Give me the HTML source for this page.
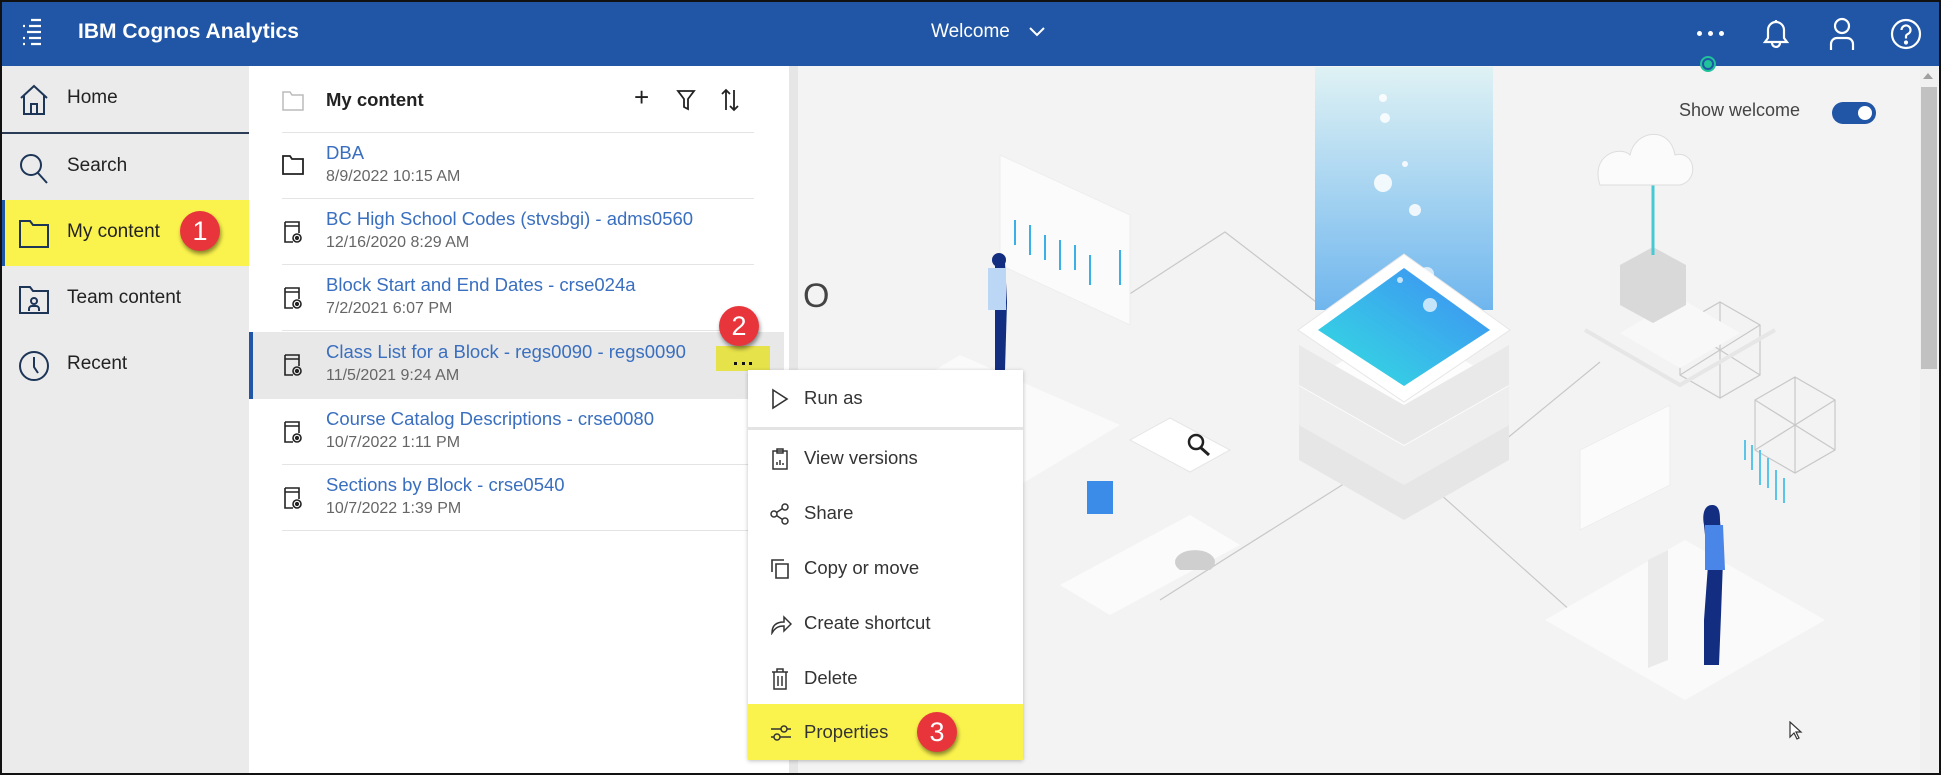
<!DOCTYPE html>
<html><head><meta charset="utf-8">
<style>
*{margin:0;padding:0;box-sizing:border-box}
body{width:1941px;height:775px;overflow:hidden;font-family:"Liberation Sans",sans-serif;background:#f3f3f3;position:relative}
.abs{position:absolute}
#hdr{left:0;top:0;width:1941px;height:66px;background:#2056a5;color:#fff}
#side{left:0;top:66px;width:249px;height:709px;background:#ebebeb}
.nav{position:absolute;left:0;width:249px;height:66px;font-size:19px;color:#222}
.nav span{position:absolute;left:67px;top:21px}
.nav svg{position:absolute;left:18px;top:17px}
#panel{left:249px;top:66px;width:540px;height:709px;background:#fff}
.row{position:absolute;left:33px;width:472px;height:66px;border-bottom:1px solid #e4e4e4}
.row .t{position:absolute;left:44px;top:9px;font-size:18.5px;color:#3a6fbf;white-space:nowrap}
.row .d{position:absolute;left:44px;top:35px;font-size:16px;color:#666;white-space:nowrap}
.row svg{position:absolute;left:0;top:22px}
.badge{position:absolute;width:40px;height:40px;border-radius:50%;background:#e8353b;color:#fff;font-size:27px;text-align:center;line-height:40px;box-shadow:1px 3px 4px rgba(0,0,0,.45)}
#menu{left:748px;top:370px;width:275px;height:390px;background:#fff;box-shadow:0 1px 4px rgba(0,0,0,.25)}
.mi{position:absolute;left:0;width:275px;height:55px;font-size:18.5px;color:#333}
.mi span{position:absolute;left:56px;top:17px}
.mi svg{position:absolute;left:22px;top:18px}
</style></head><body>
<div id="hdr" class="abs">
 <svg class="abs" style="left:20px;top:17px" width="30" height="32" viewBox="0 0 30 32" stroke="#fff" stroke-width="2.2" fill="none"><path d="M11 3h10M3 9h2M9 9h12M7 15h14M3 21h2M9 21h12M11 27h10M3 27h2"/></svg>
 <div class="abs" style="left:78px;top:20px;font-size:21px;font-weight:bold">IBM Cognos Analytics</div>
 <div class="abs" style="left:931px;top:21px;font-size:19px">Welcome</div>
 <svg class="abs" style="left:1028px;top:24px" width="18" height="14" viewBox="0 0 18 14" stroke="#fff" stroke-width="2" fill="none"><path d="M2 4l7 7 7-7"/></svg>
 <div class="abs" style="left:1697px;top:31px;width:28px;height:6px"><span class="abs" style="left:0;width:5px;height:5px;border-radius:50%;background:#fff"></span><span class="abs" style="left:11px;width:5px;height:5px;border-radius:50%;background:#fff"></span><span class="abs" style="left:22px;width:5px;height:5px;border-radius:50%;background:#fff"></span></div>
 <svg class="abs" style="left:1761px;top:17px" width="30" height="34" viewBox="0 0 30 34" stroke="#fff" stroke-width="2.2" fill="none"><path d="M4 25h22l-3-4V13a8 8 0 0 0-16 0v8z M15 3v2 M11 26a4 4 0 0 0 8 0"/></svg>
 <svg class="abs" style="left:1828px;top:17px" width="28" height="34" viewBox="0 0 28 34" stroke="#fff" stroke-width="2.2" fill="none"><circle cx="14" cy="9" r="7"/><path d="M3 33v-6a6 6 0 0 1 6-6h10a6 6 0 0 1 6 6v6"/></svg>
 <svg class="abs" style="left:1890px;top:18px" width="32" height="32" viewBox="0 0 32 32" stroke="#fff" stroke-width="2.2" fill="none"><circle cx="16" cy="16" r="14"/><path d="M11.5 12a4.5 4.5 0 1 1 6 4.2c-1 .5-1.5 1.3-1.5 2.3v2"/><circle cx="16" cy="24.5" r="1" fill="#fff"/></svg>
</div>
<div class="abs" style="left:1700px;top:56px;width:16px;height:16px;border-radius:50%;border:2px solid #1fc29a;background:#2056a5"><div style="margin:2px;width:8px;height:8px;border-radius:50%;background:#1fc29a"></div></div>

<div id="side" class="abs">
 <div class="nav" style="top:0"><svg width="32" height="34" viewBox="0 0 32 34" stroke="#1d3557" stroke-width="2" fill="none"><path d="M3 15L16 3l13 12M6 12v19h20V12M13 31v-10h6v10"/></svg><span>Home</span></div>
 <div class="abs" style="left:0;top:66px;width:249px;height:2px;background:#2a3b55"></div>
 <div class="nav" style="top:68px"><svg width="32" height="34" viewBox="0 0 32 34" stroke="#1d3557" stroke-width="2" fill="none"><circle cx="13" cy="14" r="10"/><path d="M20 22l9 10"/></svg><span>Search</span></div>
 <div class="nav" style="top:134px;background:#fbf34d;height:66px"><div class="abs" style="left:0;top:0;width:5px;height:66px;background:#2056a5"></div><svg width="32" height="34" viewBox="0 0 32 34" stroke="#1d3557" stroke-width="2" fill="none"><path d="M2 4h10l3 4h15v22H2z"/></svg><span>My content</span></div>
 <div class="nav" style="top:200px"><svg width="32" height="34" viewBox="0 0 32 34" stroke="#1d3557" stroke-width="2" fill="none"><path d="M2 4h10l3 4h15v22H2z"/><circle cx="16" cy="18" r="3"/><path d="M11 28v-2a3 3 0 0 1 3-3h4a3 3 0 0 1 3 3v2"/></svg><span>Team content</span></div>
 <div class="nav" style="top:266px"><svg width="32" height="34" viewBox="0 0 32 34" stroke="#1d3557" stroke-width="2" fill="none"><circle cx="16" cy="17" r="14"/><path d="M16 8v10l4 6"/></svg><span>Recent</span></div>
</div>
<div class="badge" style="left:180px;top:211px">1</div>

<div id="panel" class="abs">
 <svg class="abs" style="left:33px;top:25px" width="22" height="20" viewBox="0 0 22 20" stroke="#bbb" stroke-width="1.5" fill="none"><path d="M1 1h7l2 3h11v15H1z"/></svg>
 <div class="abs" style="left:77px;top:23px;font-size:18.5px;font-weight:bold;color:#222">My content</div>
 <div class="abs" style="left:385px;top:16px;font-size:26px;color:#222">+</div>
 <svg class="abs" style="left:427px;top:23px" width="20" height="22" viewBox="0 0 20 22" stroke="#222" stroke-width="1.8" fill="none"><path d="M2 2h16l-6 8v10l-4-2v-8z"/></svg>
 <svg class="abs" style="left:471px;top:22px" width="20" height="24" viewBox="0 0 20 24" stroke="#222" stroke-width="1.8" fill="none"><path d="M6 22V2M2 6l4-4 4 4M14 2v20M10 18l4 4 4-4"/></svg>
 <div class="abs" style="left:33px;top:66px;width:472px;height:1px;background:#e4e4e4"></div>
 <div class="row" style="top:67px"><svg width="22" height="20" viewBox="0 0 22 20" stroke="#222" stroke-width="1.8" fill="none"><path d="M1 1h7l2 3h11v15H1z"/></svg><div class="t">DBA</div><div class="d">8/9/2022 10:15 AM</div></div>
 <div class="row" style="top:133px"><svg width="22" height="22" viewBox="0 0 22 22" stroke="#222" stroke-width="1.6" fill="none"><path d="M3 1h14v11M3 1v20h8M3 5h14"/><circle cx="15" cy="17" r="4"/><circle cx="15" cy="17" r="1.3" fill="#222"/></svg><div class="t">BC High School Codes (stvsbgi) - adms0560</div><div class="d">12/16/2020 8:29 AM</div></div>
 <div class="row" style="top:199px"><svg width="22" height="22" viewBox="0 0 22 22" stroke="#222" stroke-width="1.6" fill="none"><path d="M3 1h14v11M3 1v20h8M3 5h14"/><circle cx="15" cy="17" r="4"/><circle cx="15" cy="17" r="1.3" fill="#222"/></svg><div class="t">Block Start and End Dates - crse024a</div><div class="d">7/2/2021 6:07 PM</div></div>
 <div class="abs" style="left:0;top:266px;width:535px;height:67px;background:#e8e8e8"><div class="abs" style="left:0;top:0;width:4px;height:67px;background:#2056a5"></div></div>
 <div class="row" style="top:266px;border:none"><svg width="22" height="22" viewBox="0 0 22 22" stroke="#222" stroke-width="1.6" fill="none"><path d="M3 1h14v11M3 1v20h8M3 5h14"/><circle cx="15" cy="17" r="4"/><circle cx="15" cy="17" r="1.3" fill="#222"/></svg><div class="t">Class List for a Block - regs0090 - regs0090</div><div class="d">11/5/2021 9:24 AM</div></div>
 <div class="abs" style="left:467px;top:280px;width:54px;height:25px;background:#e6e24a"><div style="position:absolute;left:18px;top:16px;width:18px;height:3px;border-left:3px solid #111;border-right:3px solid #111"><div style="margin:0 auto;width:3px;height:3px;background:#111"></div></div></div>
 <div class="row" style="top:333px"><svg width="22" height="22" viewBox="0 0 22 22" stroke="#222" stroke-width="1.6" fill="none"><path d="M3 1h14v11M3 1v20h8M3 5h14"/><circle cx="15" cy="17" r="4"/><circle cx="15" cy="17" r="1.3" fill="#222"/></svg><div class="t">Course Catalog Descriptions - crse0080</div><div class="d">10/7/2022 1:11 PM</div></div>
 <div class="row" style="top:399px"><svg width="22" height="22" viewBox="0 0 22 22" stroke="#222" stroke-width="1.6" fill="none"><path d="M3 1h14v11M3 1v20h8M3 5h14"/><circle cx="15" cy="17" r="4"/><circle cx="15" cy="17" r="1.3" fill="#222"/></svg><div class="t">Sections by Block - crse0540</div><div class="d">10/7/2022 1:39 PM</div></div>
</div>
<div class="abs" style="left:789px;top:66px;width:9px;height:709px;background:#e6e6e6"></div>
<div class="abs" style="left:803px;top:277px;font-size:34px;color:#444">O</div>

<svg class="abs" style="left:798px;top:66px" width="1122" height="709" viewBox="798 66 1122 709">
 <defs>
  <linearGradient id="col" x1="0" y1="0" x2="0" y2="1"><stop offset="0" stop-color="#dff2f4"/><stop offset="1" stop-color="#6fb6ee"/></linearGradient>
  <linearGradient id="scr" x1="0" y1="1" x2="1" y2="0"><stop offset="0" stop-color="#33e0e0"/><stop offset="1" stop-color="#3f8bf5"/></linearGradient>
 </defs>
 <g stroke="#c8c8c8" stroke-width="1.2" fill="none">
  <path d="M1105 310L1225 232L1320 305M1505 440L1600 362M1430 485L1620 655M1350 480L1160 600"/>
  <path d="M1720 302l40 23v50l-40 23-40-23v-50zM1720 302v96M1680 325l80 50M1760 325l-80 50"/>
  <path d="M1795 377l40 23v50l-40 23-40-23v-50zM1795 377v96M1755 400l80 50M1835 400l-80 50"/>
 </g>
 <path d="M960 355l160 70-150 90-160-70z" fill="#fafafa"/>
 <path d="M1000 155l130 60v110l-130-60z" fill="#fbfbfb" stroke="#eee"/>
 <rect x="1315" y="67" width="178" height="243" fill="url(#col)"/>
 <g fill="#fff" opacity=".85"><circle cx="1383" cy="98" r="4"/><circle cx="1385" cy="118" r="5"/><circle cx="1383" cy="183" r="9"/><circle cx="1415" cy="210" r="6"/><circle cx="1405" cy="164" r="3"/></g>
 <path d="M1299 420l105 60 105-60v40l-105 60-105-60z" fill="#e6e6e6"/>
 <path d="M1404 360l105 60-105 60-105-60z" fill="#fbfbfb"/>
 <path d="M1299 385l105 60 105-60v40l-105 60-105-60z" fill="#eeeeee"/>
 <path d="M1404 326l105 60-105 60-105-60z" fill="#fdfdfd"/>
 <path d="M1299 345l105 60 105-60v40l-105 60-105-60z" fill="#e9e9e9"/>
 <path d="M1404 254l106 76-106 72-106-72z" fill="#fff" stroke="#e6e6e6"/>
 <path d="M1404 268l86 62-86 56-86-56z" fill="url(#scr)"/>
 <g fill="#fff" opacity=".7"><circle cx="1427" cy="274" r="7"/><circle cx="1400" cy="280" r="3"/><circle cx="1430" cy="305" r="7"/></g>
 <path d="M1620 333l60-35 60 35-60 35z" fill="#f8f8f8"/>
 <path d="M1585 330l95 55 95-55" fill="none" stroke="#e6e6e6" stroke-width="4"/>
 <path d="M1620 265l33-18 33 18v40l-33 18-33-18z" fill="#d9d9d9"/>
 <path d="M1653 160v95" stroke="#45c9d4" stroke-width="3"/>
 <path d="M1600 185c-10-30 20-40 30-30 5-25 40-30 45 0 20-5 25 25 5 30z" fill="#fbfbfb" stroke="#ddd"/>
 <path d="M1545 620l140-80 140 80-140 80z" fill="#fafafa"/>
 <path d="M1580 450l90-45v80l-90 45z" fill="#fbfbfb" stroke="#eee"/>
 <path d="M1648 560l20-10v110l-20 8z" fill="#eaeaea"/>
 <path d="M1712 505c-8 0-10 10-8 20l4 40-4 55v45h15l2-50 2-55-3-40c0-10-2-15-8-15z" fill="#132d80"/>
 <path d="M1705 525l18 0 2 45h-20z" fill="#4a86e8"/>
 <path d="M1060 585l130-70 50 30-130 70z" fill="#fbfbfb"/>
 <rect x="1087" y="481" width="26" height="33" fill="#3a8ce8"/>
 <path d="M1180 570a20 12 0 1 1 30 0z" fill="#cfcfcf"/>
 <path d="M1130 440l40-22 60 32-40 22z" fill="#fff" stroke="#e6e6e6"/>
 <circle cx="1196" cy="442" r="7" fill="none" stroke="#222" stroke-width="2.5"/><path d="M1200 447l9 8" stroke="#222" stroke-width="3"/>
 <path d="M995 262l10 0 2 40 -2 68h-10z" fill="#132d80"/>
 <path d="M988 268h18v42h-18z" fill="#bcd7f5"/>
 <circle cx="999" cy="260" r="7" fill="#132d80"/>
 <g stroke="#3ab0e8" stroke-width="2"><path d="M1015 220v25M1030 225v30M1045 235v25M1060 240v30M1075 245v25M1090 255v30M1120 250v35"/></g>
 <g stroke="#5ac5e8" stroke-width="2"><path d="M1745 440v20M1752 445v25M1760 450v35M1768 458v30M1776 470v30M1784 478v25"/></g>
</svg>

<div class="abs" style="left:1679px;top:100px;font-size:18px;color:#444">Show welcome</div>
<div class="abs" style="left:1832px;top:102px;width:44px;height:22px;border-radius:11px;background:#2056a5"><div style="position:absolute;right:4px;top:4px;width:14px;height:14px;border-radius:50%;background:#fff"></div></div>
<div class="abs" style="left:1920px;top:66px;width:18px;height:709px;background:#f0f0f0"></div>
<div class="abs" style="left:1923px;top:73px;width:0;height:0;border-left:5px solid transparent;border-right:5px solid transparent;border-bottom:6px solid #a0a0a0"></div>
<div class="abs" style="left:1921px;top:87px;width:16px;height:282px;background:#c1c1c1"></div>

<div id="menu" class="abs">
 <div class="mi" style="top:0"><svg width="20" height="22" viewBox="0 0 20 22" stroke="#333" stroke-width="1.6" fill="none"><path d="M3 2l14 9-14 9z"/></svg><span>Run as</span></div>
 <div class="abs" style="left:0;top:57px;width:275px;height:3px;background:#e4e4e4"></div>
 <div class="mi" style="top:60px"><svg width="20" height="22" viewBox="0 0 20 22" stroke="#333" stroke-width="1.5" fill="none"><path d="M3 3h14v18H3zM7 1h6v4H7zM7 17v-3M10 17v-5M13 17v-2"/></svg><span>View versions</span></div>
 <div class="mi" style="top:115px"><svg width="20" height="22" viewBox="0 0 20 22" stroke="#333" stroke-width="1.5" fill="none"><circle cx="4" cy="11" r="3"/><circle cx="15" cy="4" r="3"/><circle cx="15" cy="18" r="3"/><path d="M6.5 9.5l6-4M6.5 12.5l6 4"/></svg><span>Share</span></div>
 <div class="mi" style="top:170px"><svg width="20" height="22" viewBox="0 0 20 22" stroke="#333" stroke-width="1.6" fill="none"><path d="M2 14V2h12M6 6h12v14H6z"/></svg><span>Copy or move</span></div>
 <div class="mi" style="top:225px"><svg width="22" height="22" viewBox="0 0 22 22" stroke="#333" stroke-width="1.5" fill="none"><path d="M2 20c0-8 5-11 12-11V4l7 7-7 7v-5c-6 0-9 2-12 7z"/></svg><span>Create shortcut</span></div>
 <div class="mi" style="top:280px"><svg width="20" height="22" viewBox="0 0 20 22" stroke="#333" stroke-width="1.5" fill="none"><path d="M2 4h16M7 4V1h6v3M4 4v17h12V4M8 8v10M12 8v10"/></svg><span>Delete</span></div>
 <div class="mi" style="top:334px;height:56px;background:#fbf34d"><svg width="22" height="22" viewBox="0 0 22 22" stroke="#333" stroke-width="1.5" fill="none"><path d="M1 7h20M1 15h20"/><circle cx="14" cy="7" r="3" fill="#fbf34d"/><circle cx="7" cy="15" r="3" fill="#fbf34d"/></svg><span>Properties</span></div>
</div>
<div class="badge" style="left:719px;top:306px">2</div>
<div class="badge" style="left:917px;top:712px">3</div>
<svg class="abs" style="left:1789px;top:721px" width="14" height="20" viewBox="0 0 14 20"><path d="M1 1v15l4-4 3 6 2-1-3-6h5z" fill="#fff" stroke="#333" stroke-width="1.2"/></svg>
<div class="abs" style="left:0;top:0;width:1941px;height:775px;border:2px solid #111;pointer-events:none"></div>
</body></html>
